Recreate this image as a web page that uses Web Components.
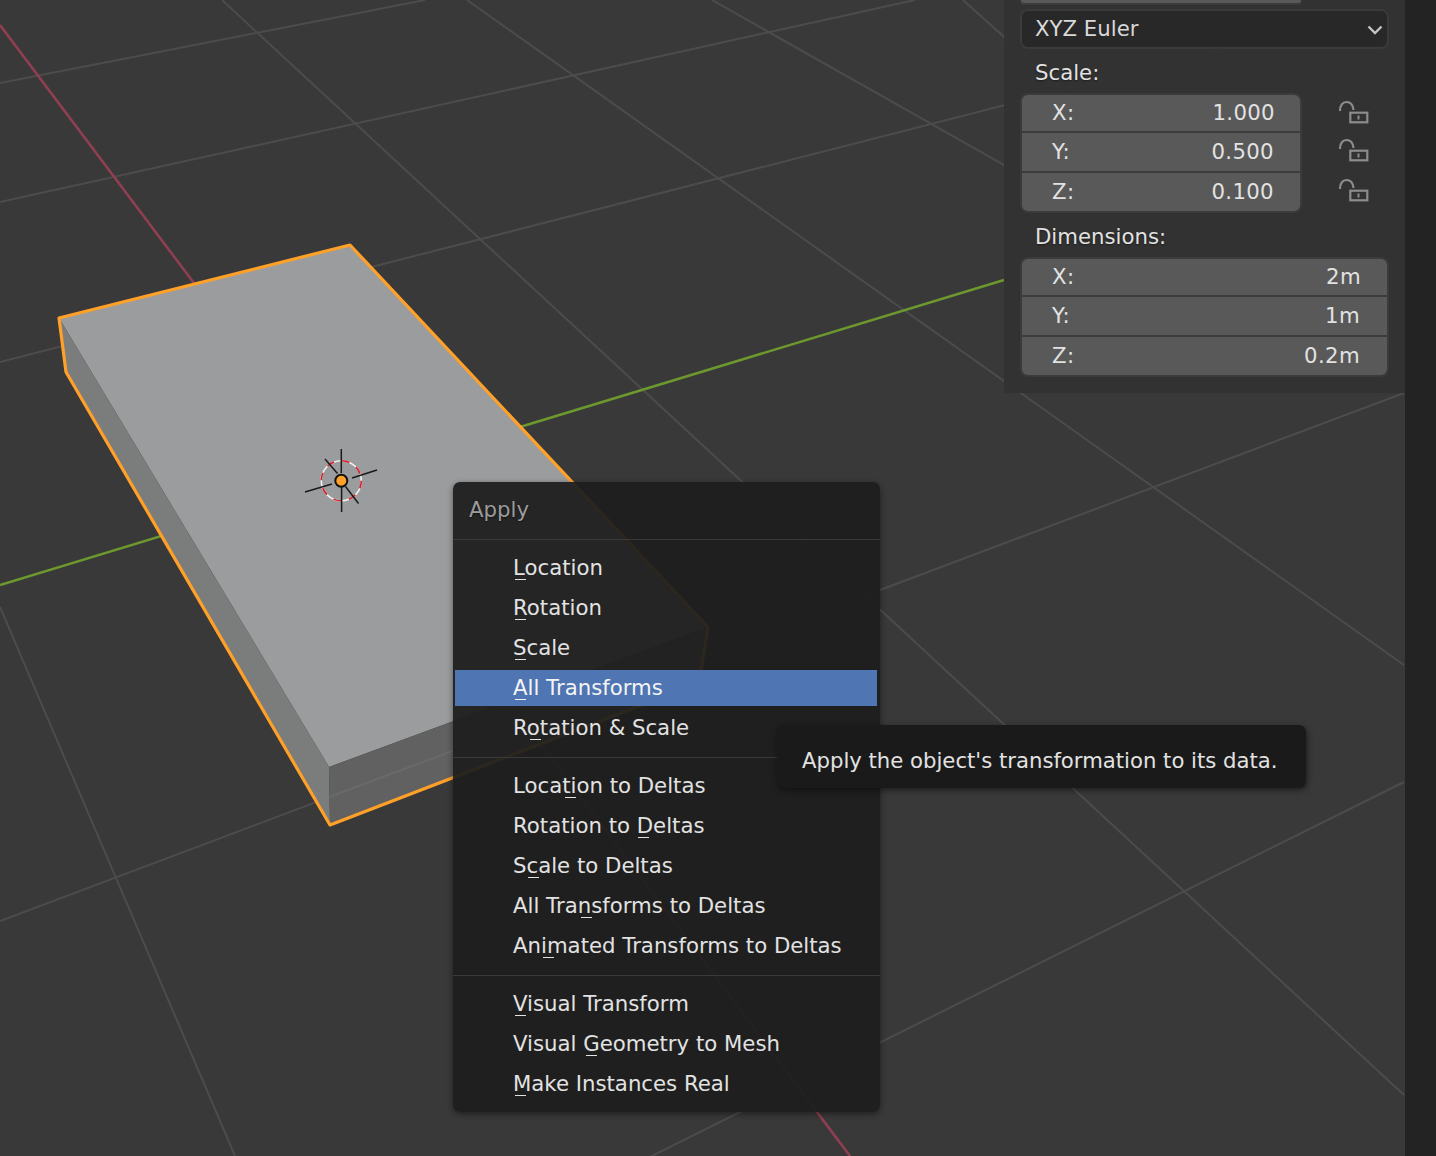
<!DOCTYPE html>
<html>
<head>
<meta charset="utf-8">
<title>Apply menu</title>
<style>
  html, body { margin: 0; padding: 0; background: #232323; }
  body { font-family: "DejaVu Sans", sans-serif; font-size: 21.25px; color: #e2e2e2; }
</style>
</head>
<body>
<bl-editor>
  <bl-viewport>
    <bl-panel>
      <bl-select>XYZ Euler</bl-select>
      <bl-label>Scale:</bl-label>
      <bl-lock-row>
        <bl-group>
          <bl-field><span slot="label">X:</span>1.000</bl-field>
          <bl-field pad="26"><span slot="label">Y:</span>0.500</bl-field>
          <bl-field pad="26"><span slot="label">Z:</span>0.100</bl-field>
        </bl-group>
      </bl-lock-row>
      <bl-label>Dimensions:</bl-label>
      <bl-group>
        <bl-field pad="26"><span slot="label">X:</span>2m</bl-field>
        <bl-field pad="27"><span slot="label">Y:</span>1m</bl-field>
        <bl-field pad="27"><span slot="label">Z:</span>0.2m</bl-field>
      </bl-group>
    </bl-panel>
    <bl-menu>
      <span slot="title">Apply</span>
      <bl-item u="2">Location</bl-item>
      <bl-item u="2">Rotation</bl-item>
      <bl-item u="2">Scale</bl-item>
      <bl-item u="2" active>All Transforms</bl-item>
      <bl-item u="17">Rotation &amp; Scale</bl-item>
      <bl-sep></bl-sep>
      <bl-item u="52">Location to Deltas</bl-item>
      <bl-item u="125">Rotation to Deltas</bl-item>
      <bl-item u="15">Scale to Deltas</bl-item>
      <bl-item u="68">All Transforms to Deltas</bl-item>
      <bl-item u="30">Animated Transforms to Deltas</bl-item>
      <bl-sep></bl-sep>
      <bl-item u="2">Visual Transform</bl-item>
      <bl-item u="73">Visual Geometry to Mesh</bl-item>
      <bl-item u="2">Make Instances Real</bl-item>
    </bl-menu>
    <bl-tooltip>Apply the object's transformation to its data.</bl-tooltip>
  </bl-viewport>
</bl-editor>

<script>
// page shell: viewport plus the dark strip on the right
class BlEditor extends HTMLElement {
  constructor() {
    super();
    this.attachShadow({ mode: 'open' });
    this.shadowRoot.innerHTML = `
      <style>
        :host { display: grid; grid-template-columns: 1405px 31px; height: 1156px; overflow: hidden; background: #232323; }
      </style>
      <slot></slot>
      <div></div>
    `;
  }
}

// 3d scene, everything in it is at its own place on the canvas
class BlViewport extends HTMLElement {
  constructor() {
    super();
    this.attachShadow({ mode: 'open' });
    this.shadowRoot.innerHTML = `
      <style>
        :host { display: block; position: relative; overflow: hidden; background: #393939; height: 1156px; }
        svg { position: absolute; left: 0; top: 0; }
        .grid line { stroke: #4c4c4c; stroke-width: 2; }
      </style>
      <svg width="1405" height="1156" viewBox="0 0 1405 1156">
        <g class="grid">
          <line x1="0" y1="83" x2="425" y2="0"/>
          <line x1="0" y1="202" x2="915" y2="0"/>
          <line x1="0" y1="362" x2="1404" y2="3"/>
          <line x1="0" y1="921" x2="1404" y2="393"/>
          <line x1="0" y1="1480" x2="1404" y2="782"/>
          <line x1="222" y1="0" x2="1404" y2="1095"/>
          <line x1="467" y1="0" x2="1404" y2="665"/>
          <line x1="712" y1="0" x2="1404" y2="391"/>
          <line x1="963" y1="0" x2="1400" y2="392"/>
          <line x1="0" y1="607" x2="235" y2="1156"/>
        </g>
        <line x1="0" y1="25" x2="850" y2="1156" stroke="#8f3f52" stroke-width="2.6"/>
        <line x1="0" y1="585" x2="1004" y2="280" stroke="#6c982e" stroke-width="2.5"/>

        <polygon points="59,318 350,245 708,627 329,767" fill="#9a9c9d"/>
        <polygon points="59,318 329,767 330,825 66,372" fill="#7b7d7c"/>
        <polygon points="329,767 708,627 699,683 330,825" fill="#616161"/>
        <line x1="329" y1="797" x2="700" y2="659" stroke="#6a6a6a" stroke-width="2"/>
        <polygon points="59,318 350,245 708,627 699,683 330,825 66,372" fill="none" stroke="#ffa028" stroke-width="3.2" stroke-linejoin="round"/>

        <g fill="none">
          <circle cx="341.3" cy="480.7" r="20" stroke="#f2f2f2" stroke-width="1.6"/>
          <circle cx="341.3" cy="480.7" r="20" stroke="#d8202c" stroke-width="1.6" stroke-dasharray="7.8 7.9"/>
          <g stroke="#1a1a1a" stroke-width="1.5">
            <line x1="341.3" y1="449" x2="341.3" y2="473"/>
            <line x1="341.6" y1="487" x2="341.6" y2="512"/>
            <line x1="305" y1="492" x2="332" y2="484"/>
            <line x1="352" y1="478" x2="377" y2="470"/>
            <line x1="325" y1="459" x2="337.5" y2="473.5"/>
            <line x1="345.5" y1="486.5" x2="358.5" y2="503.5"/>
          </g>
          <circle cx="341.3" cy="480.7" r="6" fill="#ffa028" stroke="#111" stroke-width="2"/>
        </g>
      </svg>
      <slot></slot>
    `;
  }
}

// translucent sidebar over the top right of the viewport
class BlPanel extends HTMLElement {
  constructor() {
    super();
    this.attachShadow({ mode: 'open' });
    this.shadowRoot.innerHTML = `
      <style>
        :host {
          display: block; position: absolute; top: 0; right: 0; width: 401px; box-sizing: border-box;
          padding: 0 17px 17px; background: rgba(49,49,49,.93); color: #e2e2e2;
        }
        .cut { width: 280px; height: 3px; margin-bottom: 7px; background: #595959; border-radius: 0 0 6px 6px; box-shadow: 0 1px 0 1px #3c3c3c; }
      </style>
      <div class="cut"></div>
      <slot></slot>
    `;
  }
}

class BlSelect extends HTMLElement {
  constructor() {
    super();
    this.attachShadow({ mode: 'open' });
    this.shadowRoot.innerHTML = `
      <style>
        :host {
          display: flex; align-items: center; justify-content: space-between; box-sizing: border-box; height: 38px;
          padding: 0 4px 2px 13px; background: #282828; border: 1px solid #3c3c3c; border-radius: 7px; color: #d9d9d9;
          box-shadow: 0 0 0 1px #3a3a3a;
        }
        svg { display: block; margin-top: 4px; }
      </style>
      <slot></slot>
      <svg width="16" height="12" viewBox="0 0 16 12"><path d="M1.5 2.5 L8 9 L14.500 2.500" fill="none" stroke="#c4c4c4" stroke-width="2.4"/></svg>
    `;
  }
}

class BlLabel extends HTMLElement {
  constructor() {
    super();
    this.attachShadow({ mode: 'open' });
    this.shadowRoot.innerHTML = `
      <style>
        :host { display: flex; align-items: center; height: 46px; padding: 2px 0 0 14px; box-sizing: border-box; text-shadow: 0 1px 2px rgba(0,0,0,.45); }
      </style>
      <slot></slot>
    `;
  }
}

// group of number fields joined into one rounded box
class BlGroup extends HTMLElement {
  constructor() {
    super();
    this.attachShadow({ mode: 'open' });
    this.shadowRoot.innerHTML = `
      <style>
        :host {
          display: grid; grid-template-rows: 36px 38px 38px; gap: 2px; box-sizing: border-box; height: 118px;
          background: #3c3c3c; border: 1px solid #3c3c3c; border-radius: 7px; overflow: hidden;
          box-shadow: 0 0 0 1px #3a3a3a;
        }
      </style>
      <slot></slot>
    `;
  }
}

class BlField extends HTMLElement {
  constructor() {
    super();
    this.attachShadow({ mode: 'open' });
    this.shadowRoot.innerHTML = `
      <style>
        :host {
          display: flex; align-items: center; justify-content: space-between; padding: 0 var(--pad, 25px) 2px 30px;
          background: #595959; color: #e2e2e2; letter-spacing: .35px;
        }
      </style>
      <slot name="label"></slot>
      <slot></slot>
    `;
  }
  connectedCallback() {
    if (this.hasAttribute('pad')) this.style.setProperty('--pad', this.getAttribute('pad') + 'px');
  }
}

// field group with the three padlocks next to it
class BlLockRow extends HTMLElement {
  constructor() {
    super();
    this.attachShadow({ mode: 'open' });
    const lock = `
      <svg width="31" height="24" viewBox="0 0 31 24">
        <path d="M2 11 C2 5.500 4.500 2 8.500 2 C12.500 2 15 5 15.500 10" fill="none" stroke="#8c8c8c" stroke-width="2.2"/>
        <rect x="12.300" y="12.700" width="17" height="9.600" fill="none" stroke="#8c8c8c" stroke-width="2.2"/>
        <rect x="19.500" y="15.500" width="2" height="4" fill="#8c8c8c"/>
      </svg>`;
    this.shadowRoot.innerHTML = `
      <style>
        :host { display: grid; grid-template-columns: 280px 1fr; }
        .locks { display: grid; grid-template-rows: 36px 39px 41px; padding-left: 37px; align-items: center; }
        svg { display: block; }
      </style>
      <slot></slot>
      <div class="locks">${lock}${lock}${lock}</div>
    `;
  }
}

// popup menu over the scene
class BlMenu extends HTMLElement {
  constructor() {
    super();
    this.attachShadow({ mode: 'open' });
    this.shadowRoot.innerHTML = `
      <style>
        :host {
          display: block; position: absolute; left: 453px; top: 482px; width: 427px; box-sizing: border-box;
          padding-bottom: 8px; background: rgba(30,30,30,.94); border-radius: 7px;
          box-shadow: 0 2px 6px rgba(0,0,0,.45); color: #e2e2e2;
        }
        .title {
          display: flex; align-items: center; height: 58px; padding: 0 0 2px 16px; box-sizing: border-box;
          color: #9c9c9c; border-bottom: 1px solid #3a3a3a; margin-bottom: 8px; text-shadow: 0 1px 2px rgba(0,0,0,.5);
        }
      </style>
      <div class="title"><slot name="title"></slot></div>
      <slot></slot>
    `;
  }
}

// menu row; u is where the shortcut key underline starts, from the left of the text
class BlItem extends HTMLElement {
  constructor() {
    super();
    this.attachShadow({ mode: 'open' });
    this.shadowRoot.innerHTML = `
      <style>
        :host { display: block; height: 40px; padding: 2px 3px 2px 2px; box-sizing: border-box; }
        .row { display: flex; align-items: center; height: 36px; box-sizing: border-box; padding: 0 0 2px 58px; }
        :host([active]) .row { background: #4f75b3; color: #f4f4f4; }
        .text { position: relative; white-space: nowrap; }
        .text::after {
          content: ""; position: absolute; left: var(--u, 2px); top: 24px; width: 11px; height: 1.5px; background: currentColor;
        }
      </style>
      <div class="row"><span class="text"><slot></slot></span></div>
    `;
  }
  connectedCallback() {
    this.style.setProperty('--u', (this.getAttribute('u') || 2) + 'px');
  }
}

class BlSep extends HTMLElement {
  constructor() {
    super();
    this.attachShadow({ mode: 'open' });
    this.shadowRoot.innerHTML = `
      <style>
        :host { display: block; height: 18px; box-sizing: border-box; padding-top: 9px; }
        div { height: 1px; background: #3a3a3a; }
      </style>
      <div></div>
    `;
  }
}

class BlTooltip extends HTMLElement {
  constructor() {
    super();
    this.attachShadow({ mode: 'open' });
    this.shadowRoot.innerHTML = `
      <style>
        :host {
          display: flex; align-items: center; position: absolute; left: 777px; top: 725px; width: 529px; height: 63px;
          box-sizing: border-box; padding: 7px 0 0 25px; background: #1a1a1a; border-radius: 7px;
          box-shadow: 1px 2px 6px rgba(0,0,0,.5); color: #e2e2e2; white-space: nowrap; font-size: 21.2px;
        }
      </style>
      <slot></slot>
    `;
  }
}

customElements.define('bl-editor', BlEditor);
customElements.define('bl-viewport', BlViewport);
customElements.define('bl-panel', BlPanel);
customElements.define('bl-select', BlSelect);
customElements.define('bl-label', BlLabel);
customElements.define('bl-group', BlGroup);
customElements.define('bl-field', BlField);
customElements.define('bl-lock-row', BlLockRow);
customElements.define('bl-menu', BlMenu);
customElements.define('bl-item', BlItem);
customElements.define('bl-sep', BlSep);
customElements.define('bl-tooltip', BlTooltip);
</script>
</body>
</html>
